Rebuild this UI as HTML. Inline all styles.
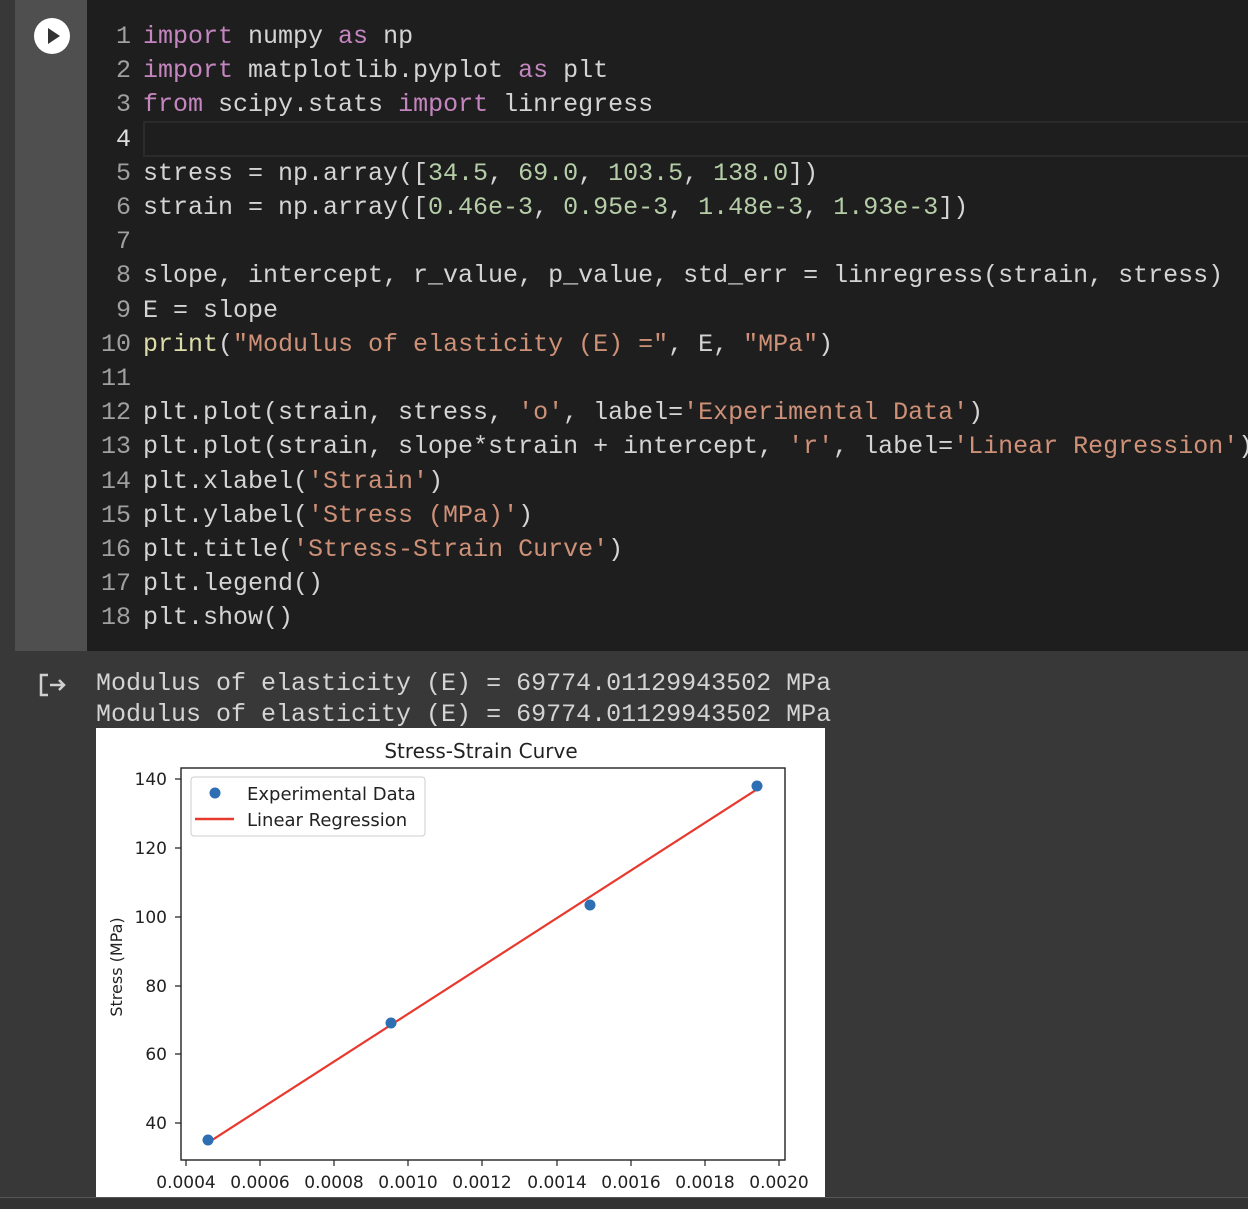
<!DOCTYPE html>
<html><head><meta charset="utf-8"><style>
body{margin:0;width:1248px;height:1208px;background:#383838;position:relative;overflow:hidden;font-family:"Liberation Mono",monospace}
#strip{position:absolute;left:0;top:0;width:15px;height:651px;background:#383838}
#gut{position:absolute;left:15px;top:0;width:72px;height:651px;background:#4f4f4f}
#code{position:absolute;left:87px;top:0;width:1161px;height:651px;background:#1e1e1e}
.ln{position:absolute;left:87px;width:44px;text-align:right;color:#a0a0a0;font-size:25px;line-height:34px;margin-top:2px}
.cl{position:absolute;left:143px;color:#d4d4d4;font-size:25px;line-height:34px;white-space:pre;margin-top:2px}
.k{color:#c586c0}.n{color:#b5cea8}.s{color:#ce9178}.f{color:#dcdcaa}
#run{position:absolute;left:34px;top:18px;width:36px;height:36px;border-radius:50%;background:#fff}
#run:after{content:"";position:absolute;left:14px;top:10px;border-left:12px solid #333;border-top:8px solid transparent;border-bottom:8px solid transparent}
#l4{position:absolute;left:143px;top:121px;width:1110px;height:32px;border:2px solid #2b2b2b;border-right:none}
.out{position:absolute;left:96px;color:#d4d4d4;font-size:25px;line-height:31px;white-space:pre;margin-top:1px}
#bot{position:absolute;left:0;top:1197px;width:1248px;height:11px;background:#333;border-top:1px solid #555}
</style></head><body>
<div id="strip"></div><div id="gut"></div><div id="code"></div>
<div id="run"></div>
<div id="l4"></div>
<div class="ln" style="top:18px">1</div><div class="cl" style="top:18px"><span class="k">import</span> numpy <span class="k">as</span> np</div>
<div class="ln" style="top:52px">2</div><div class="cl" style="top:52px"><span class="k">import</span> matplotlib.pyplot <span class="k">as</span> plt</div>
<div class="ln" style="top:86px">3</div><div class="cl" style="top:86px"><span class="k">from</span> scipy.stats <span class="k">import</span> linregress</div>
<div class="ln" style="top:121px;color:#ddd">4</div>
<div class="ln" style="top:155px">5</div><div class="cl" style="top:155px">stress = np.array([<span class="n">34.5</span>, <span class="n">69.0</span>, <span class="n">103.5</span>, <span class="n">138.0</span>])</div>
<div class="ln" style="top:189px">6</div><div class="cl" style="top:189px">strain = np.array([<span class="n">0.46e-3</span>, <span class="n">0.95e-3</span>, <span class="n">1.48e-3</span>, <span class="n">1.93e-3</span>])</div>
<div class="ln" style="top:223px">7</div>
<div class="ln" style="top:257px">8</div><div class="cl" style="top:257px">slope, intercept, r_value, p_value, std_err = linregress(strain, stress)</div>
<div class="ln" style="top:292px">9</div><div class="cl" style="top:292px">E = slope</div>
<div class="ln" style="top:326px">10</div><div class="cl" style="top:326px"><span class="f">print</span>(<span class="s">"Modulus of elasticity (E) ="</span>, E, <span class="s">"MPa"</span>)</div>
<div class="ln" style="top:360px">11</div>
<div class="ln" style="top:394px">12</div><div class="cl" style="top:394px">plt.plot(strain, stress, <span class="s">'o'</span>, label=<span class="s">'Experimental Data'</span>)</div>
<div class="ln" style="top:428px">13</div><div class="cl" style="top:428px">plt.plot(strain, slope*strain + intercept, <span class="s">'r'</span>, label=<span class="s">'Linear Regression'</span>)</div>
<div class="ln" style="top:463px">14</div><div class="cl" style="top:463px">plt.xlabel(<span class="s">'Strain'</span>)</div>
<div class="ln" style="top:497px">15</div><div class="cl" style="top:497px">plt.ylabel(<span class="s">'Stress (MPa)'</span>)</div>
<div class="ln" style="top:531px">16</div><div class="cl" style="top:531px">plt.title(<span class="s">'Stress-Strain Curve'</span>)</div>
<div class="ln" style="top:565px">17</div><div class="cl" style="top:565px">plt.legend()</div>
<div class="ln" style="top:599px">18</div><div class="cl" style="top:599px">plt.show()</div>
<svg style="position:absolute;left:38px;top:672px" width="30" height="26" viewBox="0 0 30 26"><path d="M10 3H3V23H10M12 13H26M21 8L26 13L21 18" fill="none" stroke="#d0d0d0" stroke-width="2.5"/></svg>
<div class="out" style="top:667px">Modulus of elasticity (E) = 69774.01129943502 MPa</div>
<div class="out" style="top:698px">Modulus of elasticity (E) = 69774.01129943502 MPa</div>
<svg style="position:absolute;left:96px;top:728px" width="729" height="469" viewBox="0 0 729 469" font-family="DejaVu Sans, sans-serif">
<rect width="729" height="469" fill="#fff"/>
<text x="385" y="30" font-size="20" text-anchor="middle" fill="#222">Stress-Strain Curve</text>
<line x1="112" y1="414.7" x2="660" y2="61.9" stroke="#e8392f" stroke-width="2.2"/>
<g fill="#2e6fb4"><circle cx="112" cy="412" r="5.5"/><circle cx="295" cy="295" r="5.5"/><circle cx="494" cy="177" r="5.5"/><circle cx="661" cy="58" r="5.5"/></g>
<rect x="85" y="40" width="604" height="392" fill="none" stroke="#222" stroke-width="1.4"/>
<g stroke="#222" stroke-width="1.2">
<path d="M85 51h-6M85 120h-6M85 189h-6M85 258h-6M85 326h-6M85 395h-6"/>
<path d="M90 432v6M164 432v6M238 432v6M312 432v6M386 432v6M461 432v6M535 432v6M609 432v6M683 432v6"/>
</g>
<g font-size="17" fill="#222" text-anchor="end">
<text x="71" y="57">140</text><text x="71" y="126">120</text><text x="71" y="195">100</text><text x="71" y="264">80</text><text x="71" y="332">60</text><text x="71" y="401">40</text>
</g>
<g font-size="17" fill="#222" text-anchor="middle">
<text x="90" y="460">0.0004</text><text x="164" y="460">0.0006</text><text x="238" y="460">0.0008</text><text x="312" y="460">0.0010</text><text x="386" y="460">0.0012</text><text x="461" y="460">0.0014</text><text x="535" y="460">0.0016</text><text x="609" y="460">0.0018</text><text x="683" y="460">0.0020</text>
</g>
<text transform="translate(26,239) rotate(-90)" font-size="16" text-anchor="middle" fill="#222">Stress (MPa)</text>
<rect x="95" y="49" width="234" height="59" rx="3" fill="#fff" stroke="#ccc"/>
<circle cx="119" cy="65" r="5.5" fill="#2e6fb4"/>
<line x1="99" y1="91" x2="138" y2="91" stroke="#e8392f" stroke-width="2.5"/>
<text x="151" y="72" font-size="18" fill="#222">Experimental Data</text>
<text x="151" y="98" font-size="18" fill="#222">Linear Regression</text>
</svg>
<div id="bot"></div>
</body></html>
